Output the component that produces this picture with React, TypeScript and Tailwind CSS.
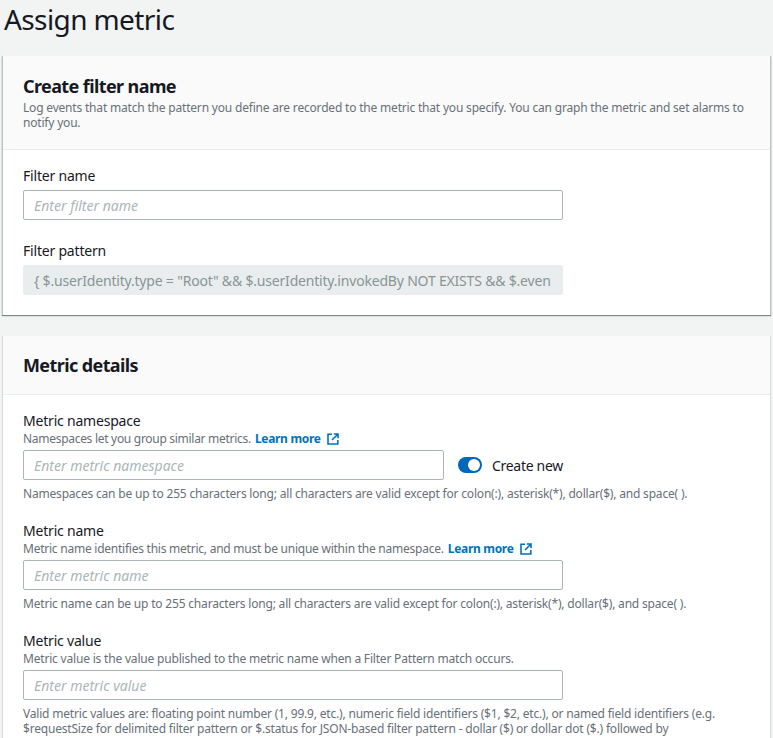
const FONT = "font-['Noto_Sans','Open_Sans',sans-serif]";

function LearnMore() {
  return (
    <a className="ml-1 inline-flex items-center gap-1.5 font-bold tracking-[-0.3px] text-[#0073bb]">
      Learn more
      <svg className="h-3 w-3" viewBox="0 0 12 12" fill="none" stroke="currentColor" strokeWidth="1.6">
        <path d="M5 1.2H1v9.8h9.8V7" />
        <path d="M6.8 1h4.2v4.2M11 1L5 7" />
      </svg>
    </a>
  );
}

function TextInput({ placeholder, className }: { placeholder: string; className: string }) {
  return (
    <div className={`flex h-[30px] items-center rounded-[2px] border border-[#aab7b8] bg-white px-[10px] text-[14px] italic text-[#aab7b8] ${className}`}>
      {placeholder}
    </div>
  );
}

function Label({ children, className = '' }: { children: React.ReactNode; className?: string }) {
  return <label className={`block text-[14px] leading-[20px] tracking-[-0.2px] text-[#16191f] ${className}`}>{children}</label>;
}

function Hint({ children, className = '' }: { children: React.ReactNode; className?: string }) {
  return <p className={`text-[12px] leading-[15px] tracking-[-0.19px] text-[#687078] ${className}`}>{children}</p>;
}

function CardHeader({ title, children, className }: { title: string; children?: React.ReactNode; className: string }) {
  return (
    <div className={`border-b border-[#eaeded] bg-[#fafafa] px-5 ${className}`}>
      <h2 className="text-[18px] leading-[22px] font-bold tracking-[-0.6px] text-[#16191f]">{title}</h2>
      {children}
    </div>
  );
}

export default function App() {
  return (
    <div className={`h-[738px] overflow-hidden bg-[#f2f3f3] ${FONT}`}>
      <h1 className="h-[56px] pl-[4px] pt-[1px] text-[28px] leading-[36px] tracking-[-0.6px] text-[#16191f]">Assign metric</h1>

      <div className="mx-[2px] border-x border-[#bcc5c5] bg-white shadow-[0_1px_1px_0_rgba(0,28,36,0.5)]">
        <CardHeader title="Create filter name" className="h-[94px] pt-[19px]">
          <Hint className="mt-[3px]">
            Log events that match the pattern you define are recorded to the metric that you specify. You can graph the metric and set alarms to notify you.
          </Hint>
        </CardHeader>
        <div className="h-[165px] px-5 pt-[16px]">
          <Label>Filter name</Label>
          <TextInput placeholder="Enter filter name" className="mt-[4px] w-[540px]" />
          <Label className="mt-[21px]">Filter pattern</Label>
          <div className="mt-[4px] flex h-[30px] w-[540px] items-center overflow-hidden whitespace-nowrap rounded-[2px] bg-[#eaeded] px-[11px] text-[14px] tracking-[-0.19px] text-[#879596]">
            <span className="w-[517px] overflow-hidden">{'{ $.userIdentity.type = "Root" && $.userIdentity.invokedBy NOT EXISTS && $.eventType != "AwsServiceEvent" }'}</span>
          </div>
        </div>
      </div>

      <div className="mx-[2px] mt-[21px] border-x border-[#d5dbdb] bg-white">
        <CardHeader title="Metric details" className="h-[59px] pt-[18px]" />
        <div className="px-5 pt-[16px]">
          <Label>Metric namespace</Label>
          <Hint>
            <span className="tracking-[-0.29px]">Namespaces let you group similar metrics.</span>
            <LearnMore />
          </Hint>
          <div className="mt-[4px] flex items-center gap-[14px]">
            <TextInput placeholder="Enter metric namespace" className="w-[421px]" />
            <span className="relative h-[16px] w-[24px] rounded-full bg-[#0067b9]">
              <span className="absolute right-[2px] top-[2px] h-[12px] w-[12px] rounded-full bg-white" />
            </span>
            <span className="ml-[-4px] text-[14px] tracking-[-0.3px] text-[#16191f]">Create new</span>
          </div>
          <Hint className="mt-[6px]">
            Namespaces can be up to 255 characters long; all characters are valid except for colon(:), asterisk(*), dollar($), and space( ).
          </Hint>

          <Label className="mt-[20px]">Metric name</Label>
          <Hint>
            <span className="tracking-[-0.24px]">Metric name identifies this metric, and must be unique within the namespace.</span>
            <LearnMore />
          </Hint>
          <TextInput placeholder="Enter metric name" className="mt-[4px] w-[540px]" />
          <Hint className="mt-[6px]">
            Metric name can be up to 255 characters long; all characters are valid except for colon(:), asterisk(*), dollar($), and space( ).
          </Hint>

          <Label className="mt-[20px]">Metric value</Label>
          <Hint>
            Metric value is the value published to the metric name when a Filter Pattern match occurs.
          </Hint>
          <TextInput placeholder="Enter metric value" className="mt-[4px] w-[540px]" />
          <Hint className="mt-[6px] max-w-[705px]">
            Valid metric values are: floating point number (1, 99.9, etc.), numeric field identifiers ($1, $2, etc.), or named field identifiers (e.g. $requestSize for delimited filter pattern or $.status for JSON-based filter pattern - dollar ($) or dollar dot ($.) followed by alphanumeric and/or underscore (_) characters).
          </Hint>
        </div>
      </div>
    </div>
  );
}
